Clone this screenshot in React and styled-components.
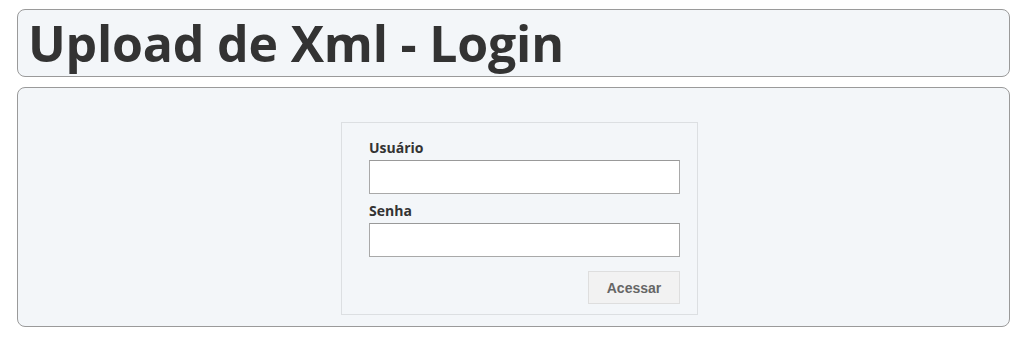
import React from "react";
import styled, { createGlobalStyle } from "styled-components";

const Global = createGlobalStyle`
  html, body { margin: 0; padding: 0; background: #fff; }
  body { font-family: "Open Sans", "Liberation Sans", sans-serif; color: #333; }
  * { box-sizing: border-box; }
`;

const Page = styled.div`
  display: flex;
  flex-direction: column;
  gap: 10px;
  padding: 9px 14px 0 17px;
`;

const Panel = styled.section`
  background: #f3f6f9;
  border: 1px solid #9a9a9a;
  border-radius: 8px;
`;

const Header = styled(Panel)`
  height: 68px;
  padding: 0 10px;
`;

const Title = styled.h1`
  margin: 0;
  font-size: 50px;
  line-height: 66px;
  font-weight: 700;
  color: #333;
  letter-spacing: -0.2px;
`;

const Content = styled(Panel)`
  height: 240px;
  display: flex;
  justify-content: center;
  align-items: flex-start;
  padding: 34px 0 0 12px;
`;

const Form = styled.form`
  width: 357px;
  border: 1px solid #dcdfe2;
  padding: 15px 17px 10px 27px;
  display: flex;
  flex-direction: column;
`;

const Label = styled.label`
  font-size: 14px;
  line-height: 20px;
  font-weight: 700;
  color: #333;
  margin-top: ${(p) => (p.$first ? "0" : "7px")};
  margin-bottom: 2px;
`;

const Input = styled.input`
  width: 311px;
  height: 34px;
  border: 1px solid #a9a9a9;
  border-top-color: #999;
  background: #fff;
  margin: 0;
  padding: 0 6px;
`;

const Actions = styled.div`
  display: flex;
  justify-content: flex-end;
  margin-top: 14px;
`;

const Button = styled.button`
  width: 92px;
  height: 33px;
  background: #f2f2f2;
  border: 1px solid #dedede;
  color: #666;
  font-family: "Liberation Sans", Arial, sans-serif;
  font-weight: 700;
  font-size: 14px;
  padding: 0;
`;

export default function App() {
  return (
    <>
      <Global />
      <Page>
        <Header>
          <Title>Upload de Xml - Login</Title>
        </Header>
        <Content>
          <Form onSubmit={(e) => e.preventDefault()}>
            <Label $first htmlFor="usuario">Usuário</Label>
            <Input id="usuario" type="text" />
            <Label htmlFor="senha">Senha</Label>
            <Input id="senha" type="password" />
            <Actions>
              <Button type="submit">Acessar</Button>
            </Actions>
          </Form>
        </Content>
      </Page>
    </>
  );
}
